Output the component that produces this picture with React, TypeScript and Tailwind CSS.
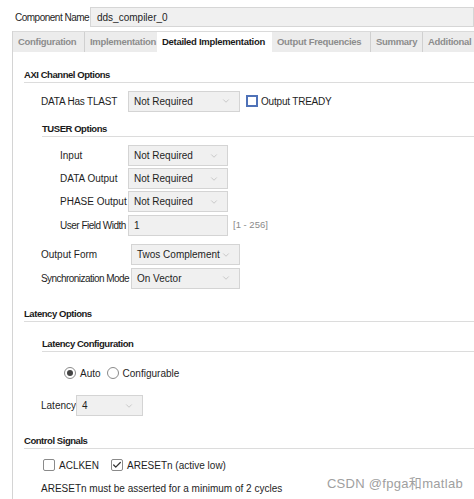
import { ChevronDown, Check } from "lucide-react";

const font = { fontFamily: '"Liberation Sans", Arial, sans-serif' };

function Select({ value, w }: { value: string; w: string }) {
  return (
    <div
      className={`${w} shrink-0 h-[21px] flex items-center justify-between bg-[#f0f0f0] border border-[#d4d4d4] pl-[5px] pr-[8px] text-[10px] text-[#1e1e1e]`}
    >
      <span>{value}</span>
      <ChevronDown className="w-[10px] h-[10px] text-[#b0b0b0]" strokeWidth={1.5} />
    </div>
  );
}

function Header({ title, indent, mt }: { title: string; indent: string; mt: string }) {
  return (
    <div className={`${indent} ${mt} h-[15px] flex items-center border-b border-[#dcdcdc] text-[9.5px] font-bold tracking-[-0.45px] text-[#1a1a1a]`}>
      {title}
    </div>
  );
}

const tabs = [
  { label: "Configuration", w: "w-[71px]" },
  { label: "Implementation", w: "w-[73px]" },
  { label: "Detailed Implementation", w: "w-[115px]", active: true },
  { label: "Output Frequencies", w: "w-[98px]" },
  { label: "Summary", w: "w-[52px]" },
  { label: "Additional", w: "w-[60px]" },
];

export default function App() {
  return (
    <div className="w-[474px] h-[499px] bg-white overflow-hidden relative text-[#1e1e1e] whitespace-nowrap" style={font}>
      {/* component name */}
      <div className="flex items-center h-[20px] mt-[7px] pl-[15px]">
        <span className="text-[10px] w-[75px] shrink-0 tracking-[-0.5px]">Component Name</span>
        <div className="flex-1 h-[20px] bg-[#f0f0f0] border border-[#d6d6d6] flex items-center pl-[6px] text-[10px]">
          dds_compiler_0
        </div>
      </div>

      <div className="ml-[12px] mt-[4px] border-l border-[#d4d4d4] h-[480px]">
        {/* tabs */}
        <div className="flex h-[21px] bg-[#ececec] border-t border-[#dadada]">
          {tabs.map((t, i) => (
            <div
              key={t.label}
              className={`${t.w} shrink-0 flex items-center pl-[5px] text-[9.5px] font-bold tracking-[-0.3px] ${
                t.active ? "bg-white text-[#1a1a1a]" : "text-[#8c8c8c]"
              } ${!t.active && i !== 0 && !tabs[i - 1].active ? "border-l border-[#d0d0d0]" : ""}`}
            >
              {t.label}
            </div>
          ))}
        </div>

        <div className="pl-[11px] flex flex-col">
          <Header title="AXI Channel Options" indent="" mt="mt-[16px]" />

          <div className="flex items-center h-[22px] mt-[7px] pl-[17px]">
            <span className="w-[87px] shrink-0 text-[10px] tracking-[-0.2px]">DATA Has TLAST</span>
            <Select value="Not Required" w="w-[112px]" />
            <div className="ml-[6px] w-[12px] h-[12px] border-2 border-[#4f72b8]" />
            <span className="ml-[3px] text-[10px] tracking-[-0.2px]">Output TREADY</span>
          </div>

          <Header title="TUSER Options" indent="ml-[18px]" mt="mt-[10px]" />

          <div className="flex flex-col gap-[2px] mt-[8px] pl-[36px]">
            {[
              ["Input", "Not Required"],
              ["DATA Output", "Not Required"],
              ["PHASE Output", "Not Required"],
            ].map(([l, v]) => (
              <div key={l} className="flex items-center h-[21px]">
                <span className="w-[68px] shrink-0 text-[10px]">{l}</span>
                <Select value={v} w="w-[100px]" />
              </div>
            ))}
            <div className="flex items-center h-[21px] mt-[1px]">
              <span className="w-[68px] shrink-0 text-[10px] tracking-[-0.5px]">User Field Width</span>
              <div className="w-[100px] shrink-0 h-[21px] bg-[#f0f0f0] border border-[#d4d4d4] flex items-center pl-[5px] text-[10px]">
                1
              </div>
              <span className="ml-[5px] text-[9.5px] text-[#8a8a8a]">[1 - 256]</span>
            </div>
          </div>

          <div className="flex flex-col gap-[2px] mt-[8px] pl-[17px]">
            <div className="flex items-center h-[21px]">
              <span className="w-[90px] shrink-0 text-[10px]">Output Form</span>
              <Select value="Twos Complement" w="w-[109px]" />
            </div>
            <div className="flex items-center h-[22px]">
              <span className="w-[90px] shrink-0 text-[10px] tracking-[-0.55px]">Synchronization Mode</span>
              <Select value="On Vector" w="w-[109px]" />
            </div>
          </div>

          <Header title="Latency Options" indent="" mt="mt-[18px]" />
          <Header title="Latency Configuration" indent="ml-[18px]" mt="mt-[15px]" />

          <div className="flex items-center h-[18px] mt-[12px] pl-[40px] text-[10px]">
            <div className="w-[12px] h-[12px] rounded-full border border-[#8a8a8a] flex items-center justify-center">
              <div className="w-[6px] h-[6px] rounded-full bg-[#444]" />
            </div>
            <span className="ml-[4px]">Auto</span>
            <div className="ml-[6px] w-[12px] h-[12px] rounded-full border border-[#8a8a8a]" />
            <span className="ml-[4px]">Configurable</span>
          </div>

          <div className="flex items-center h-[21px] mt-[13px] pl-[17px]">
            <span className="w-[35px] shrink-0 text-[10px]">Latency</span>
            <Select value="4" w="w-[67px]" />
          </div>

          <Header title="Control Signals" indent="" mt="mt-[18px]" />

          <div className="flex items-center h-[16px] mt-[8px] pl-[19px] text-[10px]">
            <div className="w-[12px] h-[12px] border border-[#8a8a8a] rounded-[2px]" />
            <span className="ml-[4px]">ACLKEN</span>
            <div className="ml-[12px] w-[12px] h-[12px] border border-[#8a8a8a] rounded-[2px] flex items-center justify-center">
              <Check className="w-[10px] h-[10px] text-[#333]" strokeWidth={3} />
            </div>
            <span className="ml-[4px]">ARESETn (active low)</span>
          </div>

          <div className="h-[16px] mt-[7px] pl-[17px] flex items-center text-[10px]">
            ARESETn must be asserted for a minimum of 2 cycles
          </div>
        </div>
      </div>

      <div
        className="absolute right-[11px] bottom-[6px] text-[13px] text-[#a0a0a0] tracking-[0.3px]"
        style={{ fontFamily: '"Liberation Sans", "Noto Sans CJK SC", sans-serif' }}
      >
        CSDN @fpga和matlab
      </div>
    </div>
  );
}
